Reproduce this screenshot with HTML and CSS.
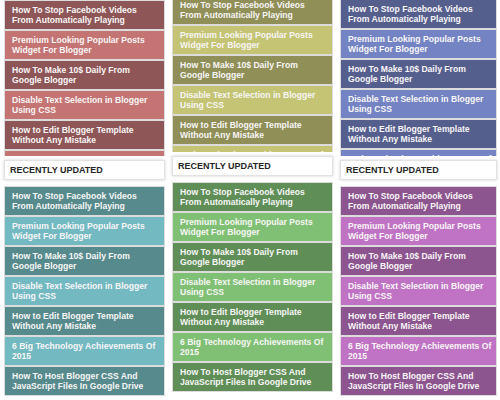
FILE: index.html
```html
<!DOCTYPE html>
<html>
<head>
<meta charset="utf-8">
<link rel="stylesheet" href="styles.css">
</head>
<body>
<div class="page">
  <div class="col col--a">
    <div class="scroll">
      <ul class="list list--red scroll-inner">
        <li>How To Stop Facebook Videos<br>From Automatically Playing</li>
        <li>Premium Looking Popular Posts<br>Widget For Blogger</li>
        <li>How To Make 10$ Daily From<br>Google Blogger</li>
        <li>Disable Text Selection in Blogger<br>Using CSS</li>
        <li>How to Edit Blogger Template<br>Without Any Mistake</li>
        <li>6 Big Technology Achievements Of<br>2015</li>
      </ul>
    </div>
    <div class="heading">RECENTLY UPDATED</div>
    <ul class="list list--teal">
      <li>How To Stop Facebook Videos<br>From Automatically Playing</li>
      <li>Premium Looking Popular Posts<br>Widget For Blogger</li>
      <li>How To Make 10$ Daily From<br>Google Blogger</li>
      <li>Disable Text Selection in Blogger<br>Using CSS</li>
      <li>How to Edit Blogger Template<br>Without Any Mistake</li>
      <li>6 Big Technology Achievements Of<br>2015</li>
      <li>How To Host Blogger CSS And<br>JavaScript Files In Google Drive</li>
    </ul>
  </div>

  <div class="col col--b">
    <div class="scroll">
      <ul class="list list--olive scroll-inner">
        <li>How To Stop Facebook Videos<br>From Automatically Playing</li>
        <li>Premium Looking Popular Posts<br>Widget For Blogger</li>
        <li>How To Make 10$ Daily From<br>Google Blogger</li>
        <li>Disable Text Selection in Blogger<br>Using CSS</li>
        <li>How to Edit Blogger Template<br>Without Any Mistake</li>
        <li>6 Big Technology Achievements Of<br>2015</li>
      </ul>
    </div>
    <div class="heading">RECENTLY UPDATED</div>
    <ul class="list list--green">
      <li>How To Stop Facebook Videos<br>From Automatically Playing</li>
      <li>Premium Looking Popular Posts<br>Widget For Blogger</li>
      <li>How To Make 10$ Daily From<br>Google Blogger</li>
      <li>Disable Text Selection in Blogger<br>Using CSS</li>
      <li>How to Edit Blogger Template<br>Without Any Mistake</li>
      <li>6 Big Technology Achievements Of<br>2015</li>
      <li>How To Host Blogger CSS And<br>JavaScript Files In Google Drive</li>
    </ul>
  </div>

  <div class="col col--c">
    <div class="scroll">
      <ul class="list list--blue scroll-inner">
        <li>How To Stop Facebook Videos<br>From Automatically Playing</li>
        <li>Premium Looking Popular Posts<br>Widget For Blogger</li>
        <li>How To Make 10$ Daily From<br>Google Blogger</li>
        <li>Disable Text Selection in Blogger<br>Using CSS</li>
        <li>How to Edit Blogger Template<br>Without Any Mistake</li>
        <li>6 Big Technology Achievements Of<br>2015</li>
      </ul>
    </div>
    <div class="heading">RECENTLY UPDATED</div>
    <ul class="list list--purple">
      <li>How To Stop Facebook Videos<br>From Automatically Playing</li>
      <li>Premium Looking Popular Posts<br>Widget For Blogger</li>
      <li>How To Make 10$ Daily From<br>Google Blogger</li>
      <li>Disable Text Selection in Blogger<br>Using CSS</li>
      <li>How to Edit Blogger Template<br>Without Any Mistake</li>
      <li>6 Big Technology Achievements Of<br>2015</li>
      <li>How To Host Blogger CSS And<br>JavaScript Files In Google Drive</li>
    </ul>
  </div>
</div>
</body>
</html>
```

FILE: styles.css
```css
html, body {
  margin: 0;
  padding: 0;
  background: #ffffff;
  overflow: hidden;
}

.page {
  display: grid;
  grid-template-columns: 161px 161px 157px;
  column-gap: 7px;
  padding-left: 4px;
  font-family: "Liberation Sans", Arial, sans-serif;
}

.col {
  display: flex;
  flex-direction: column;
}

.col--b {
  margin-top: -2px;
}

.scroll {
  height: 156px;
  overflow: hidden;
}

.col--b .scroll {
  height: 154px;
}

.scroll-inner {
  margin-top: -4px;
}

.col--b .scroll-inner {
  margin-top: -3px;
}

.col--c .scroll-inner {
  margin-top: -1px;
}

.list {
  list-style: none;
  margin: 0;
  padding: 0;
}

.list li {
  box-sizing: border-box;
  height: 30px;
  border: 1px solid #dcdcdc;
  padding: 4px 0 0 7px;
  font-size: 8.6px;
  line-height: 10.4px;
  font-weight: bold;
  color: #f8f6f6;
  white-space: nowrap;
  overflow: hidden;
}

.list--red li { background: #8e5656; }
.list--red li:nth-child(even) { background: #c57474; }

.list--olive li { background: #8f8f57; }
.list--olive li:nth-child(even) { background: #c4c474; }

.list--blue li { background: #555f8e; }
.list--blue li:nth-child(even) { background: #7483c3; }

.list--teal li { background: #568a8c; }
.list--teal li:nth-child(even) { background: #73b9c1; }

.list--green li { background: #5f8f56; }
.list--green li:nth-child(even) { background: #80c075; }

.list--purple li { background: #8d5590; }
.list--purple li:nth-child(even) { background: #c073c5; }

.heading {
  box-sizing: border-box;
  height: 20px;
  margin: 4px 0 6px;
  padding: 0 5px;
  border: 1px solid #e2e2e2;
  background: #ffffff;
  box-shadow: 0 0 3px rgba(0, 0, 0, 0.18);
  font-size: 9px;
  line-height: 18px;
  font-weight: bold;
  color: #262626;
}
```
